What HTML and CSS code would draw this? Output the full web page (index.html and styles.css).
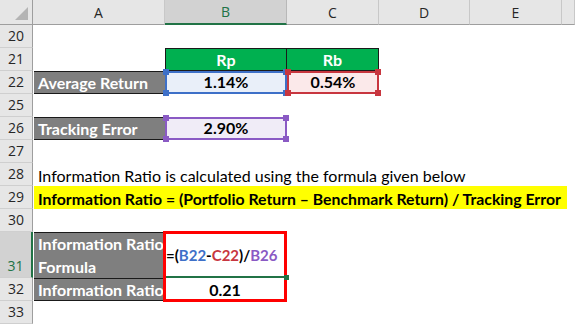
FILE: index.html
```html
<!DOCTYPE html>
<html>
<head>
<meta charset="utf-8">
<link rel="stylesheet" href="styles.css">
</head>
<body>
<div class="sheet">
  <div class="corner"><div class="tri"></div></div>
  <div class="ch">A</div>
  <div class="ch sel">B</div>
  <div class="ch">C</div>
  <div class="ch">D</div>
  <div class="ch">E</div>
  <div class="ch last"></div>

  <div class="rh r1">20</div>
  <div class="rh r2">21</div>
  <div class="rh r3">22</div>
  <div class="rh r4">25</div>
  <div class="rh r5">26</div>
  <div class="rh r6">27</div>
  <div class="rh r7">28</div>
  <div class="rh r8">29</div>
  <div class="rh r9">30</div>
  <div class="rh r10 rsel">31</div>
  <div class="rh r11">32</div>
  <div class="rh r12">33</div>

  <div class="green gb r2">Rp</div>
  <div class="green gc r2">Rb</div>

  <div class="label r3">Average Return</div>
  <div class="ref blue cb r3">1.14%<i class="h tl"></i><i class="h tr"></i><i class="h bl"></i><i class="h br"></i></div>
  <div class="ref red cc r3">0.54%<i class="h tl"></i><i class="h tr"></i><i class="h bl"></i><i class="h br"></i></div>

  <div class="label r5">Tracking Error</div>
  <div class="ref purple cb r5">2.90%<i class="h tl"></i><i class="h tr"></i><i class="h bl"></i><i class="h br"></i></div>

  <div class="spill r7">Information Ratio is calculated using the formula given below</div>
  <div class="spill hl r8"><span class="yl">Information Ratio = (Portfolio Return – Benchmark Return) / Tracking Error</span></div>

  <div class="label wrap r10"><span>Information Ratio</span><span>Formula</span></div>
  <div class="label r11">Information Ratio</div>

  <div class="box">
    <div class="f1">=(<span class="cb1">B22</span>-<span class="cr1">C22</span>)/<span class="cp1">B26</span></div>
    <div class="f2">0.21</div>
    <i class="gh"></i>
  </div>
</div>
</body>
</html>
```

FILE: styles.css
```css
* { box-sizing: border-box; }
html, body { margin: 0; padding: 0; background: #fff; }
body { font-family: Lato, "Open Sans", sans-serif; font-size: 16px; color: #000; }

.sheet {
  width: 575px;
  height: 324px;
  overflow: hidden;
  display: grid;
  grid-template-columns: 33px 132px 122px 92px 91px 92px 13px;
  grid-template-rows: 25px 23px 23px 23px 23px 23px 23px 23px 23px 23px 46px 23px 23px;
  position: relative;
}

.corner { background: #e6e6e6; border-right: 1px solid #9e9e9e; border-bottom: 1px solid #9e9e9e; position: relative; grid-column: 1; grid-row: 1; }
.tri { position: absolute; right: 4px; bottom: 4px; width: 0; height: 0; border-left: 13px solid transparent; border-bottom: 13px solid #b4b4b4; }

.ch { grid-row: 1; background: #e6e6e6; border-right: 1px solid #c8c8c8; border-bottom: 1px solid #9e9e9e; display: flex; align-items: center; justify-content: center; color: #262626; font-family: "Open Sans", Lato, sans-serif; font-size: 14px; }
.ch.sel { background: #d2d2d2; color: #217346; border-bottom: 2px solid #217346; border-right-color: #b8b8b8; }

.rh { grid-column: 1; background: #e6e6e6; border-right: 1px solid #9e9e9e; border-bottom: 1px solid #cfcfcf; display: flex; align-items: flex-end; justify-content: center; padding-bottom: 1px; color: #262626; font-family: "Open Sans", Lato, sans-serif; font-size: 14px; line-height: 20px; }
.rh.rsel { background: #d2d2d2; color: #217346; border-right: 2px solid #217346; }

.r1 { grid-row: 2; } .r2 { grid-row: 3; } .r3 { grid-row: 4; } .r4 { grid-row: 5; }
.r5 { grid-row: 6; } .r6 { grid-row: 7; } .r7 { grid-row: 8; } .r8 { grid-row: 9; }
.r9 { grid-row: 10; } .r10 { grid-row: 11; } .r11 { grid-row: 12; } .r12 { grid-row: 13; }

.green { background: #00b050; color: #fff; font-weight: bold; border: 1px solid #1a1a1a; display: flex; align-items: flex-end; justify-content: center; padding-bottom: 1px; }
.gb { grid-column: 3; }
.gc { grid-column: 4; margin-left: -1px; }

.label { grid-column: 2; margin-left: 1px; background: #7f7f7f; color: #fff; font-weight: bold; border-top: 1px solid #1a1a1a; border-bottom: 1px solid #1a1a1a; display: flex; align-items: flex-end; padding: 0 0 1px 4px; white-space: nowrap; overflow: hidden; }
.label.wrap { flex-direction: column; align-items: flex-start; justify-content: flex-end; line-height: 23px; padding-bottom: 0; border-bottom: none; }
.label.r11 { border-top: 1px solid #1a1a1a; }

.ref { position: relative; font-weight: bold; display: flex; align-items: flex-end; justify-content: center; padding-bottom: 1px; border: 2px solid; }
.cb { grid-column: 3; }
.cc { grid-column: 4; }
.blue { background: #e9eff9; border-color: #3e70c8; }
.blue .h { background: #3e70c8; }
.red { background: #fbe9ea; border-color: #c8363f; }
.red .h { background: #c8363f; }
.purple { background: #f0ecf7; border-color: #8a5ac4; }
.purple .h { background: #8a5ac4; }
.h { position: absolute; width: 6px; height: 6px; }
.tl { left: -4px; top: -4px; }
.tr { right: -4px; top: -4px; }
.bl { left: -4px; bottom: -4px; }
.br { right: -4px; bottom: -4px; }

.spill { grid-column: 2 / 8; margin-left: 1px; display: flex; align-items: flex-end; padding: 0 0 1px 4px; white-space: nowrap; }
.spill.hl { background: #ffff00; margin-right: 8px; font-weight: bold; font-size: 15.8px; }

.box { grid-column: 3; grid-row: 11 / 13; border: 3px solid #ff0000; margin: -1px 0 -1px -2px; position: relative; display: grid; grid-template-rows: 44px 1fr; font-weight: bold; }
.f1 { display: flex; align-items: center; padding-left: 0; border-bottom: 2px solid #217346; white-space: nowrap; margin-right: -3px; font-size: 15px; }
.f2 { display: flex; align-items: flex-end; justify-content: center; padding-bottom: 0; }
.cb1 { color: #3e70c8; }
.cr1 { color: #c8363f; }
.cp1 { color: #8a5ac4; }
.gh { position: absolute; right: -5px; top: 41px; width: 5px; height: 5px; background: #217346; }
```
